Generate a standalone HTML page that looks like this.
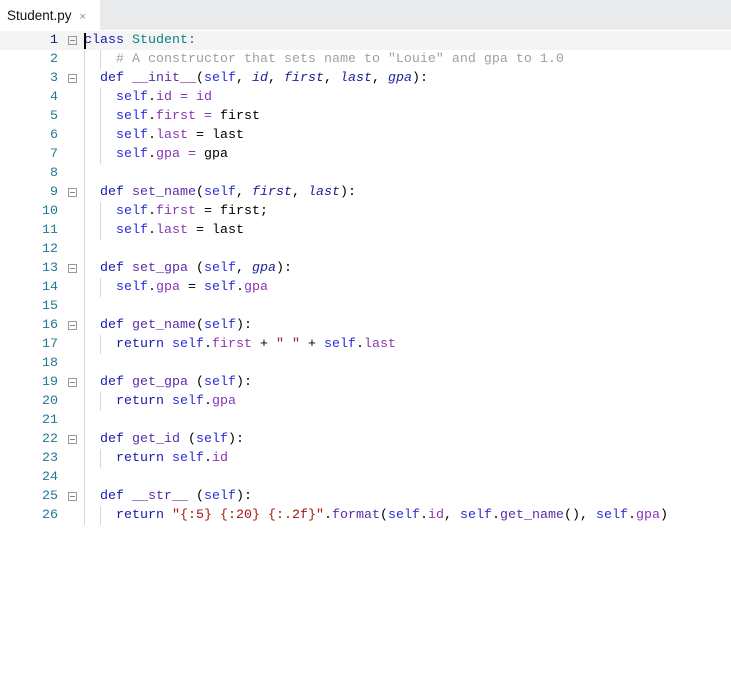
<!DOCTYPE html>
<html><head><style>
body{margin:0;background:#fff;width:731px;height:682px;overflow:hidden;font-family:"Liberation Mono",monospace;}
.tabbar{height:30px;background:#e9eaec;position:relative}
.tab{position:absolute;left:0;top:0;width:100px;height:30px;background:#fff;font-family:"Liberation Sans",sans-serif;font-size:13.5px;color:#111;line-height:31px;padding-left:7px;box-sizing:border-box}
.tab span{color:#888;font-size:11px;margin-left:8px}
.ln{position:absolute;left:0;width:58px;text-align:right;font-size:13.33px;color:#237893}
.row{position:absolute;left:0;width:731px;height:19px;line-height:20px}
.code{position:absolute;left:84px;font-size:13.33px;white-space:pre;color:#000}
.fold{position:absolute;left:68px;top:5px;width:7px;height:7px;border:1px solid #999;box-sizing:content-box}
.fold:after{content:"";position:absolute;left:1px;top:3px;width:5px;height:1px;background:#888}
.g{position:absolute;width:1px;background:#d8d8d8}
.k{color:#1a1ab0}.cl{color:#14807e}.s{color:#2c2cd8}.p{color:#8a35b5}.a{color:#1e1e99;font-style:italic}.st{color:#a31515}.c{color:#a0a0a0}.f{color:#5a2ca8}
</style></head><body>
<div class="tabbar"><div class="tab">Student.py<span>×</span></div></div>
<div id="ed"></div>
<script>
var L=[
['<span class="k">class</span> <span class="cl">Student:</span>',1],
['    <span class="c"># A constructor that sets name to "Louie" and gpa to 1.0</span>',0],
['  <span class="k">def</span> <span class="f">__init__</span>(<span class="s">self</span>, <span class="a">id</span>, <span class="a">first</span>, <span class="a">last</span>, <span class="a">gpa</span>):',1],
['    <span class="s">self</span>.<span class="p">id</span> <span class="p">=</span> <span class="p">id</span>',0],
['    <span class="s">self</span>.<span class="p">first</span> <span class="p">=</span> first',0],
['    <span class="s">self</span>.<span class="p">last</span> = last',0],
['    <span class="s">self</span>.<span class="p">gpa</span> <span class="p">=</span> gpa',0],
['',0],
['  <span class="k">def</span> <span class="f">set_name</span>(<span class="s">self</span>, <span class="a">first</span>, <span class="a">last</span>):',1],
['    <span class="s">self</span>.<span class="p">first</span> = first;',0],
['    <span class="s">self</span>.<span class="p">last</span> = last',0],
['',0],
['  <span class="k">def</span> <span class="f">set_gpa</span> (<span class="s">self</span>, <span class="a">gpa</span>):',1],
['    <span class="s">self</span>.<span class="p">gpa</span> = <span class="s">self</span>.<span class="p">gpa</span>',0],
['',0],
['  <span class="k">def</span> <span class="f">get_name</span>(<span class="s">self</span>):',1],
['    <span class="k">return</span> <span class="s">self</span>.<span class="p">first</span> + <span class="st">" "</span> + <span class="s">self</span>.<span class="p">last</span>',0],
['',0],
['  <span class="k">def</span> <span class="f">get_gpa</span> (<span class="s">self</span>):',1],
['    <span class="k">return</span> <span class="s">self</span>.<span class="p">gpa</span>',0],
['',0],
['  <span class="k">def</span> <span class="f">get_id</span> (<span class="s">self</span>):',1],
['    <span class="k">return</span> <span class="s">self</span>.<span class="p">id</span>',0],
['',0],
['  <span class="k">def</span> <span class="f">__str__</span> (<span class="s">self</span>):',1],
['    <span class="k">return</span> <span class="st">"{:5} {:20} {:.2f}"</span>.<span class="f">format</span>(<span class="s">self</span>.<span class="p">id</span>, <span class="s">self</span>.<span class="f">get_name</span>(), <span class="s">self</span>.<span class="p">gpa</span>)',0]];
var h='';
for(var i=0;i<L.length;i++){var y=31+19*i;
h+='<div class="row" style="top:'+y+'px;'+(i==0?'background:#f4f4f5':'')+'"><div class="ln" style="'+(i==0?'color:#0b216f':'')+'">'+(i+1)+'</div>'+(L[i][1]?'<div class="fold"></div>':'')+'<div class="code">'+L[i][0]+'</div></div>';}
h+='<div class="g" style="left:84px;top:50px;height:475px"></div>';
h+='<div class="g" style="left:100px;top:50px;height:19px"></div>';
var fn=[[3,7],[9,11],[13,14],[16,17],[19,20],[22,23],[25,26]];
fn.forEach(function(r){h+='<div class="g" style="left:100px;top:'+(31+19*r[0])+'px;height:'+(19*(r[1]-r[0]))+'px"></div>';});
h+='<div style="position:absolute;left:84px;top:33px;width:2px;height:16px;background:#000"></div>';
document.getElementById('ed').innerHTML=h;
</script>
</body></html>
